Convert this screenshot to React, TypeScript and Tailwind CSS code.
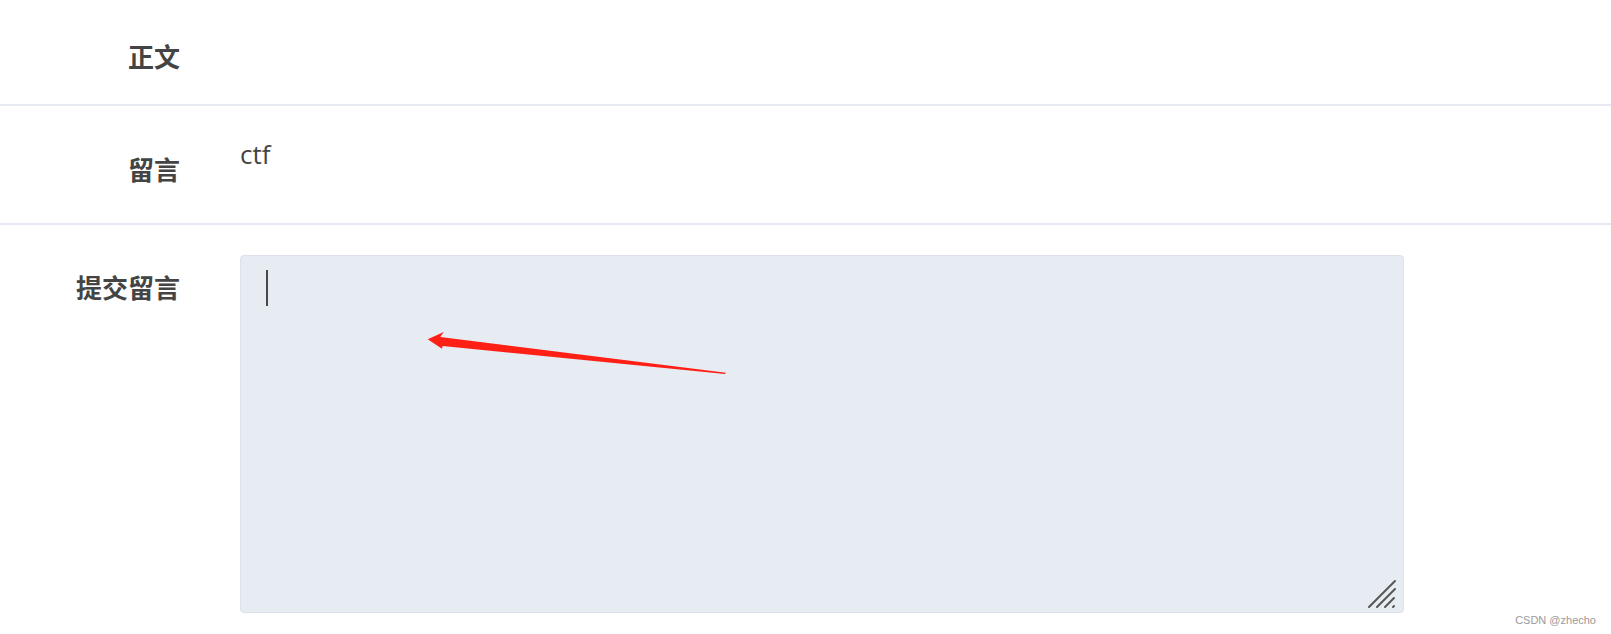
const labelFont = {
  fontFamily: '"Noto Sans CJK SC", "Noto Sans", sans-serif',
};

function Label({ text, className }: { text: string; className?: string }) {
  return (
    <div
      className={`w-[180px] shrink-0 text-right text-[26px] leading-[38px] font-bold text-[#444444] ${className ?? ""}`}
      style={labelFont}
    >
      {text}
    </div>
  );
}

function ResizeHandle() {
  return (
    <svg
      width="32"
      height="32"
      viewBox="0 0 32 32"
      className="absolute right-[4px] bottom-[2px]"
    >
      <g stroke="#555555" strokeWidth="2" strokeLinecap="round">
        <line x1="2" y1="29" x2="28" y2="3" />
        <line x1="10" y1="29" x2="28" y2="11" />
        <line x1="18" y1="29" x2="27" y2="20" />
        <line x1="26" y1="29" x2="27" y2="28" />
      </g>
    </svg>
  );
}

export default function App() {
  return (
    <div
      className="relative w-full h-[634px] bg-white overflow-hidden"
      style={{ fontFamily: '"Open Sans", "Noto Sans CJK SC", sans-serif' }}
    >
      {/* 正文 */}
      <div className="flex h-[106px] pt-[37px] border-b-2 border-[#e6e8f2]">
        <Label text="正文" />
      </div>

      {/* 留言 */}
      <div className="flex h-[119px] border-b-2 border-[#e6e8f2]">
        <Label text="留言" className="mt-[44px]" />
        <div className="ml-[60px] mt-[29px] text-[26px] leading-[38px] text-[#444444]">
          ctf
        </div>
      </div>

      {/* 提交留言 */}
      <div className="flex pt-[30px]">
        <Label text="提交留言" className="mt-[13px]" />
        <div className="relative ml-[60px] w-[1164px] h-[358px] rounded-[4px] border border-[#dde1e9] bg-[#e7ebf2]">
          <div className="ml-[25px] mt-[14px] w-[2px] h-[36px] bg-[#4a4a4a]" />
          <svg
            className="absolute inset-0 pointer-events-none"
            width="1164"
            height="358"
          >
            <polygon
              points="186.7,83.3 202.7,76 199.3,81 485,116.7 484,117.9 201.7,90 201,92.7"
              fill="#ff2015"
            />
          </svg>
          <ResizeHandle />
        </div>
      </div>

      <div
        className="absolute right-[15px] bottom-[7px] text-[11px] leading-[13px] text-[#9a9a9a]"
        style={{ fontFamily: '"Liberation Sans", Arial, sans-serif' }}
      >
        CSDN @zhecho
      </div>
    </div>
  );
}
